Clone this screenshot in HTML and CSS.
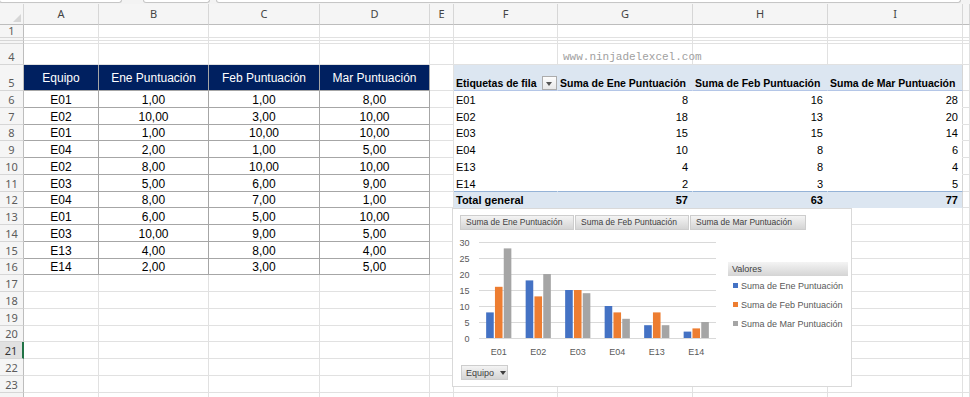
FILE: index.html
```html
<!DOCTYPE html>
<html lang="es">
<head>
    <meta charset="UTF-8">
    <meta name="viewport" content="width=device-width, initial-scale=1.0">
    <title>Tabla dinámica - Puntuación por equipo</title>
    <link rel="stylesheet" href="styles.css">
</head>
<body>
    <div class="topbar">
        <div class="tab tab-name"></div>
        <div class="tab tab-fx"></div>
        <div class="tab tab-formula"></div>
    </div>

    <div class="sheet">
        <!-- cabecera de columnas -->
        <div class="c ch corner"></div><div class="c ch">A</div><div class="c ch">B</div><div class="c ch">C</div><div class="c ch">D</div><div class="c ch">E</div><div class="c ch">F</div><div class="c ch">G</div><div class="c ch">H</div><div class="c ch">I</div><div class="c ch"></div>

        <!-- 1 a 4 -->
        <div class="c rh short">1</div><div class="c"></div><div class="c"></div><div class="c"></div><div class="c"></div><div class="c"></div><div class="c"></div><div class="c"></div><div class="c"></div><div class="c"></div><div class="c"></div>
        <div class="c rh"></div><div class="c"></div><div class="c"></div><div class="c"></div><div class="c"></div><div class="c"></div><div class="c"></div><div class="c"></div><div class="c"></div><div class="c"></div><div class="c"></div>
        <div class="c rh"></div><div class="c"></div><div class="c"></div><div class="c"></div><div class="c"></div><div class="c"></div><div class="c"></div><div class="c"></div><div class="c"></div><div class="c"></div><div class="c"></div>
        <div class="c rh">4</div><div class="c"></div><div class="c"></div><div class="c"></div><div class="c"></div><div class="c"></div><div class="c"></div><div class="c"></div><div class="c"></div><div class="c"></div><div class="c"></div>

        <!-- 5: encabezados -->
        <div class="c rh">5</div>
        <div class="c th">Equipo</div><div class="c th">Ene Puntuación</div><div class="c th">Feb Puntuación</div><div class="c th">Mar Puntuación</div>
        <div class="c"></div>
        <div class="c ph">Etiquetas de fila <span class="dd"></span></div><div class="c ph">Suma de Ene Puntuación</div><div class="c ph">Suma de Feb Puntuación</div><div class="c ph edge">Suma de Mar Puntuación</div>
        <div class="c"></div>

        <!-- 6 a 12 -->
        <div class="c rh">6</div><div class="c tb">E01</div><div class="c tb">1,00</div><div class="c tb">1,00</div><div class="c tb">8,00</div><div class="c"></div><div class="c pv">E01</div><div class="c pv num">8</div><div class="c pv num">16</div><div class="c pv num edge">28</div><div class="c"></div>
        <div class="c rh">7</div><div class="c tb">E02</div><div class="c tb">10,00</div><div class="c tb">3,00</div><div class="c tb">10,00</div><div class="c"></div><div class="c pv">E02</div><div class="c pv num">18</div><div class="c pv num">13</div><div class="c pv num edge">20</div><div class="c"></div>
        <div class="c rh">8</div><div class="c tb">E01</div><div class="c tb">1,00</div><div class="c tb">10,00</div><div class="c tb">10,00</div><div class="c"></div><div class="c pv">E03</div><div class="c pv num">15</div><div class="c pv num">15</div><div class="c pv num edge">14</div><div class="c"></div>
        <div class="c rh">9</div><div class="c tb">E04</div><div class="c tb">2,00</div><div class="c tb">1,00</div><div class="c tb">5,00</div><div class="c"></div><div class="c pv">E04</div><div class="c pv num">10</div><div class="c pv num">8</div><div class="c pv num edge">6</div><div class="c"></div>
        <div class="c rh">10</div><div class="c tb">E02</div><div class="c tb">8,00</div><div class="c tb">10,00</div><div class="c tb">10,00</div><div class="c"></div><div class="c pv">E13</div><div class="c pv num">4</div><div class="c pv num">8</div><div class="c pv num edge">4</div><div class="c"></div>
        <div class="c rh">11</div><div class="c tb">E03</div><div class="c tb">5,00</div><div class="c tb">6,00</div><div class="c tb">9,00</div><div class="c"></div><div class="c pv pend">E14</div><div class="c pv num pend">2</div><div class="c pv num pend">3</div><div class="c pv num pend edge">5</div><div class="c"></div>
        <div class="c rh">12</div><div class="c tb">E04</div><div class="c tb">8,00</div><div class="c tb">7,00</div><div class="c tb">1,00</div><div class="c"></div><div class="c pt">Total general</div><div class="c pt num">57</div><div class="c pt num">63</div><div class="c pt num edge">77</div><div class="c"></div>

        <!-- 13 a 16 -->
        <div class="c rh">13</div><div class="c tb">E01</div><div class="c tb">6,00</div><div class="c tb">5,00</div><div class="c tb">10,00</div><div class="c"></div><div class="c"></div><div class="c"></div><div class="c"></div><div class="c"></div><div class="c"></div>
        <div class="c rh">14</div><div class="c tb">E03</div><div class="c tb">10,00</div><div class="c tb">9,00</div><div class="c tb">5,00</div><div class="c"></div><div class="c"></div><div class="c"></div><div class="c"></div><div class="c"></div><div class="c"></div>
        <div class="c rh">15</div><div class="c tb">E13</div><div class="c tb">4,00</div><div class="c tb">8,00</div><div class="c tb">4,00</div><div class="c"></div><div class="c"></div><div class="c"></div><div class="c"></div><div class="c"></div><div class="c"></div>
        <div class="c rh">16</div><div class="c tb">E14</div><div class="c tb">2,00</div><div class="c tb">3,00</div><div class="c tb">5,00</div><div class="c"></div><div class="c"></div><div class="c"></div><div class="c"></div><div class="c"></div><div class="c"></div>

        <!-- 17 a 24 -->
        <div class="c rh">17</div><div class="c"></div><div class="c"></div><div class="c"></div><div class="c"></div><div class="c"></div><div class="c"></div><div class="c"></div><div class="c"></div><div class="c"></div><div class="c"></div>
        <div class="c rh">18</div><div class="c"></div><div class="c"></div><div class="c"></div><div class="c"></div><div class="c"></div><div class="c"></div><div class="c"></div><div class="c"></div><div class="c"></div><div class="c"></div>
        <div class="c rh">19</div><div class="c"></div><div class="c"></div><div class="c"></div><div class="c"></div><div class="c"></div><div class="c"></div><div class="c"></div><div class="c"></div><div class="c"></div><div class="c"></div>
        <div class="c rh">20</div><div class="c"></div><div class="c"></div><div class="c"></div><div class="c"></div><div class="c"></div><div class="c"></div><div class="c"></div><div class="c"></div><div class="c"></div><div class="c"></div>
        <div class="c rh sel">21</div><div class="c"></div><div class="c"></div><div class="c"></div><div class="c"></div><div class="c"></div><div class="c"></div><div class="c"></div><div class="c"></div><div class="c"></div><div class="c"></div>
        <div class="c rh">22</div><div class="c"></div><div class="c"></div><div class="c"></div><div class="c"></div><div class="c"></div><div class="c"></div><div class="c"></div><div class="c"></div><div class="c"></div><div class="c"></div>
        <div class="c rh">23</div><div class="c"></div><div class="c"></div><div class="c"></div><div class="c"></div><div class="c"></div><div class="c"></div><div class="c"></div><div class="c"></div><div class="c"></div><div class="c"></div>
        <div class="c rh">24</div><div class="c"></div><div class="c"></div><div class="c"></div><div class="c"></div><div class="c"></div><div class="c"></div><div class="c"></div><div class="c"></div><div class="c"></div><div class="c"></div>

        <span class="mark">www.ninjadelexcel.com</span>

        <div class="chart">
            <div class="fields">
                <span class="fbtn">Suma de Ene Puntuación</span>
                <span class="fbtn">Suma de Feb Puntuación</span>
                <span class="fbtn wide">Suma de Mar Puntuación</span>
            </div>
            <div class="chart-body">
                <svg class="plot" width="270" height="134" viewBox="1 22 270 134">
                    <g stroke="#d9d9d9" stroke-width="1">
                        <line x1="27" y1="34.5" x2="264" y2="34.5"/>
                        <line x1="27" y1="50.5" x2="264" y2="50.5"/>
                        <line x1="27" y1="66.5" x2="264" y2="66.5"/>
                        <line x1="27" y1="82.5" x2="264" y2="82.5"/>
                        <line x1="27" y1="98.5" x2="264" y2="98.5"/>
                        <line x1="27" y1="114.5" x2="264" y2="114.5"/>
                        <line x1="27" y1="130.5" x2="264" y2="130.5"/>
                    </g>
                    <g class="tick" text-anchor="end">
                        <text x="17.5" y="37.5">30</text>
                        <text x="17.5" y="53.5">25</text>
                        <text x="17.5" y="69.5">20</text>
                        <text x="17.5" y="85.5">15</text>
                        <text x="17.5" y="101.5">10</text>
                        <text x="17.5" y="117.5">5</text>
                        <text x="17.5" y="133.5">0</text>
                    </g>
                    <!-- Ene -->
                    <g fill="#4472c4">
                        <rect x="34.15" y="104.4" width="7.6" height="25.6"/>
                        <rect x="73.65" y="72.4" width="7.6" height="57.6"/>
                        <rect x="113.15" y="82" width="7.6" height="48"/>
                        <rect x="152.65" y="98" width="7.6" height="32"/>
                        <rect x="192.15" y="117.2" width="7.6" height="12.8"/>
                        <rect x="231.65" y="123.6" width="7.6" height="6.4"/>
                    </g>
                    <!-- Feb -->
                    <g fill="#ed7d31">
                        <rect x="42.95" y="78.8" width="7.6" height="51.2"/>
                        <rect x="82.45" y="88.4" width="7.6" height="41.6"/>
                        <rect x="121.95" y="82" width="7.6" height="48"/>
                        <rect x="161.45" y="104.4" width="7.6" height="25.6"/>
                        <rect x="200.95" y="104.4" width="7.6" height="25.6"/>
                        <rect x="240.45" y="120.4" width="7.6" height="9.6"/>
                    </g>
                    <!-- Mar -->
                    <g fill="#a5a5a5">
                        <rect x="51.75" y="40.4" width="7.6" height="89.6"/>
                        <rect x="91.25" y="66" width="7.6" height="64"/>
                        <rect x="130.75" y="85.2" width="7.6" height="44.8"/>
                        <rect x="170.25" y="110.8" width="7.6" height="19.2"/>
                        <rect x="209.75" y="117.2" width="7.6" height="12.8"/>
                        <rect x="249.25" y="114" width="7.6" height="16"/>
                    </g>
                    <g class="tick" text-anchor="middle">
                        <text x="46.75" y="147">E01</text>
                        <text x="86.25" y="147">E02</text>
                        <text x="125.75" y="147">E03</text>
                        <text x="165.25" y="147">E04</text>
                        <text x="204.75" y="147">E13</text>
                        <text x="244.25" y="147">E14</text>
                    </g>
                </svg>
                <div class="legend">
                    <div class="legend-title">Valores</div>
                    <div class="legend-item"><span class="key ene"></span>Suma de Ene Puntuación</div>
                    <div class="legend-item"><span class="key feb"></span>Suma de Feb Puntuación</div>
                    <div class="legend-item"><span class="key mar"></span>Suma de Mar Puntuación</div>
                </div>
            </div>
            <span class="axis-btn">Equipo <span class="tri"></span></span>
        </div>
    </div>
</body>
</html>
```

FILE: styles.css
```css
* {
    box-sizing: border-box;
}

body {
    margin: 0;
    font-family: "Liberation Sans", Arial, sans-serif;
    background: #fff;
    overflow: hidden;
}

.topbar {
    display: flex;
    height: 4px;
    background: #f3f3f3;
}

.tab {
    height: 3px;
    background: #fff;
    border: 1px solid #c6c6c6;
    border-top: none;
    border-radius: 0 0 4px 4px;
}

.tab-name {
    width: 123px;
    margin-left: -1px;
}

.tab-fx {
    width: 67px;
    margin-left: 21px;
}

.tab-formula {
    width: 745px;
    margin-left: 6px;
}

.sheet {
    position: relative;
    display: grid;
    grid-template-columns: 24px 75px 110px 111px 110px 24px 104px 135px 135px 135px 1fr;
    grid-template-rows: 21px 13px 3px 3px 21px 26px repeat(19, 16.75px);
}

.c {
    display: flex;
    align-items: flex-end;
    min-width: 0;
    padding: 0 3px;
    border-right: 1px solid #e1e1e1;
    border-bottom: 1px solid #e1e1e1;
    font-size: 12px;
    line-height: 14px;
    color: #000;
    white-space: nowrap;
    overflow: hidden;
}

/* cabeceras */
.ch {
    align-items: center;
    justify-content: center;
    background: #f5f5f5;
    border-right-color: #d6d6d6;
    border-bottom-color: #bdbdbd;
    font-family: "Noto Sans", sans-serif;
    font-size: 11px;
    color: #444;
}

.corner {
    position: relative;
}

.corner::after {
    content: "";
    position: absolute;
    right: 2px;
    bottom: 2px;
    border-left: 8px solid transparent;
    border-bottom: 8px solid #d6d6d6;
}

.rh {
    justify-content: center;
    padding: 0;
    background: #f5f5f5;
    border-right-color: #bdbdbd;
    border-bottom-color: #d6d6d6;
    font-family: "Noto Sans", sans-serif;
    font-size: 11px;
    color: #5b5b5b;
}

.rh.short {
    line-height: 12px;
    overflow: visible;
}

.rh.sel {
    background: #e1e1e1;
    border-right: 2px solid #217346;
    color: #333;
}

/* tabla de datos */
.th {
    align-items: center;
    justify-content: center;
    background: #002060;
    color: #fff;
    border-right-color: #a6a6a6;
    border-bottom-color: #a6a6a6;
}

.tb {
    justify-content: center;
    border-right-color: #a6a6a6;
    border-bottom-color: #a6a6a6;
}

/* tabla dinámica */
.ph {
    padding: 0 0 0 2px;
    background: #dce6f1;
    border-right-color: #dce6f1;
    border-bottom-color: #b4c6e7;
    font-size: 10.5px;
    font-weight: bold;
}

.dd {
    position: relative;
    width: 15px;
    height: 14px;
    margin-left: auto;
    background: linear-gradient(#fdfdfd, #e8e8e8);
    border: 1px solid #acacac;
}

.dd::after {
    content: "";
    position: absolute;
    left: 3px;
    top: 5px;
    border-left: 3.5px solid transparent;
    border-right: 3.5px solid transparent;
    border-top: 4px solid #555;
}

.pv {
    padding: 0 4px 0 2px;
    border-right-color: #fff;
    border-bottom-color: #fff;
    font-size: 11px;
}

.pt {
    padding: 0 4px 0 2px;
    background: #dce6f1;
    border-right-color: #dce6f1;
    border-bottom-color: #dce6f1;
    font-size: 11px;
    font-weight: bold;
}

.num {
    justify-content: flex-end;
}

.pend {
    border-bottom-color: #95b3d7;
}

.edge {
    border-right-color: #d6d6d6;
}

.mark {
    position: absolute;
    left: 563px;
    top: 46px;
    font-family: "Liberation Mono", monospace;
    font-size: 11px;
    line-height: 14px;
    color: #a0a0a0;
}

/* gráfico dinámico */
.chart {
    position: absolute;
    left: 452px;
    top: 204px;
    width: 400px;
    height: 179px;
    background: #fff;
    border: 1px solid #d9d9d9;
}

.fields {
    display: flex;
    gap: 1px;
    margin: 6px 0 0 7px;
}

.fbtn, .axis-btn, .legend-title {
    background: linear-gradient(#f4f4f4, #d4d4d4);
    color: #404040;
}

.fbtn {
    width: 114px;
    height: 15px;
    padding-left: 5px;
    border: 1px solid #cdcdcd;
    font-size: 8.5px;
    line-height: 13px;
}

.fbtn.wide {
    width: 116px;
}

.chart-body {
    display: flex;
}

.plot {
    display: block;
}

.tick {
    font-family: "Liberation Sans", Arial, sans-serif;
    font-size: 9px;
    fill: #595959;
}

.legend {
    width: 120px;
    margin: 32px 0 0 5px;
}

.legend-title {
    height: 14px;
    padding-left: 4px;
    font-size: 9px;
    line-height: 14px;
}

.legend-item {
    display: flex;
    align-items: center;
    gap: 3px;
    height: 19px;
    padding-left: 5px;
    font-size: 9px;
    color: #595959;
}

.key {
    width: 5px;
    height: 5px;
}

.key.ene {
    background: #4472c4;
}

.key.feb {
    background: #ed7d31;
}

.key.mar {
    background: #a5a5a5;
}

.axis-btn {
    display: flex;
    align-items: center;
    gap: 6px;
    width: 47px;
    height: 15px;
    margin: 1px 0 0 8px;
    padding-left: 4px;
    border: 1px solid #cdcdcd;
    font-size: 9px;
}

.tri {
    border-left: 3.5px solid transparent;
    border-right: 3.5px solid transparent;
    border-top: 4px solid #404040;
}
```
